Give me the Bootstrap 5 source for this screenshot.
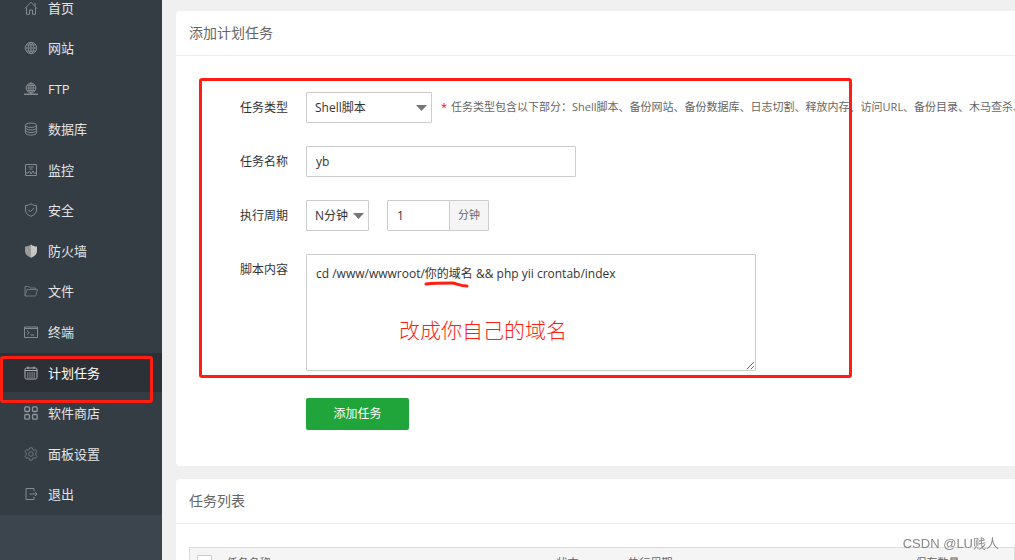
<!DOCTYPE html>
<html lang="zh-CN">
<head>
<meta charset="utf-8">
<meta name="viewport" content="width=device-width, initial-scale=1">
<title>计划任务</title>
<link href="https://cdn.jsdelivr.net/npm/bootstrap@5.3.0/dist/css/bootstrap.min.css" rel="stylesheet">
<script src="https://cdn.jsdelivr.net/npm/bootstrap@5.3.0/dist/js/bootstrap.bundle.min.js" defer></script>
<style>
  :root { --mark-red: #ff1e10; --line: #ccc; }
  body { font-family: "Open Sans", "Noto Sans CJK SC", sans-serif; font-size: 12px; line-height: 18px; color: #333; background: #f0f0f0; overflow: hidden; }
  .side { width: 162px; background: #3c444d; }
  /* the menu is scrolled a little past its top edge */
  .side-menu { height: 527px; margin-top: -12px; background: #353d44; }
  .side-menu li { flex: 1 1 0; padding-bottom: 1px; }
  .side-menu a { height: 100%; padding-left: 24px; gap: 10px; font-size: 13px; color: #e3e5e7; text-decoration: none; }
  .side-menu a.active { background: #2c3138; color: #fff; }
  .side-menu svg { width: 14px; height: 14px; fill: none; stroke: #858a8f; stroke-width: 1; flex: none; }
  .side-mark { position: absolute; left: 0; right: 9px; top: 3px; height: 47px; border: 3px solid var(--mark-red); border-radius: 3px; pointer-events: none; z-index: 1; }
  .main-col { padding: 11px 0 0 14px; min-width: 0; gap: 13px; }
  .panel { background: #fff; border-radius: 4px 0 0 4px; overflow: hidden; }
  .panel-title { height: 45px; padding: 1px 0 0 13px; border-bottom: 1px solid #eee; font-size: 14px; color: #666; margin: 0; font-weight: 400; }
  .task-form { padding: 36px 0; gap: 23px; }
  .field-row { display: flex; }
  .field-label { width: 112px; line-height: 31px; text-align: right; margin-right: 18px; flex: none; }
  .form-control, .form-select { height: 31px; border: 1px solid var(--line); border-radius: 1px; font-size: 12px; line-height: 18px; color: #333; padding: 5px 9px; }
  .form-select { padding: 5px 16px 5px 8px; background: #fff url("data:image/svg+xml,%3Csvg xmlns='http://www.w3.org/2000/svg' viewBox='0 0 11 6'%3E%3Cpath d='M0 0h11L5.5 6z' fill='%23767676'/%3E%3C/svg%3E") no-repeat right 4px center / 11px 6px; }
  .w-type { width: 126px; } .w-name { width: 270px; } .w-unit { width: 63px; } .w-cycle { width: 102px; margin-left: 18px; }
  .form-control.script-box { height: 117px; width: 450px; padding: 10px 9px; resize: both; }
  .input-group-text { border: 1px solid var(--line); border-radius: 0 1px 1px 0; background: #f5f5f5; color: #666; font-size: 11px; padding: 0 8px; }
  .help-note { font-size: 11px; line-height: 30px; color: #666; margin-left: 9px; white-space: nowrap; }
  .btn-add { background: #20a53a; color: #fff; border: 0; border-radius: 2px; width: 103px; height: 32px; font-size: 12px; padding: 0; margin: 4px 0 0 130px; }
  .btn-add:hover { background: #10952a; color: #fff; }
  .form-mark { position: absolute; left: 23px; top: 22px; width: 653px; height: 300px; border: 3px solid var(--mark-red); border-radius: 3px; pointer-events: none; }
  .line-mark { position: absolute; left: 118px; top: 26px; width: 46px; height: 8px; pointer-events: none; }
  .word-mark { position: absolute; left: 93px; top: 61px; font-size: 21px; line-height: 30px; font-weight: 300; color: var(--mark-red); white-space: nowrap; pointer-events: none; }
  .task-table { margin: 23px 0 0 13px; width: calc(100% - 13px); table-layout: fixed; border: 1px solid #ddd; font-size: 11px; line-height: 14px; }
  .task-table th { background: #f5f5f5; color: #666; font-weight: 400; padding: 7px; }
  .task-table .form-check-input { display: block; width: 15px; height: 15px; margin: 0; border-color: #ccc; border-radius: 1px; }
  .watermark { position: fixed; right: 16px; bottom: 6px; font-family: "Liberation Sans", "Noto Sans CJK SC", sans-serif; font-size: 13px; line-height: 20px; color: #888; }
</style>
</head>
<body>
<div class="d-flex min-vh-100">
  <nav class="side flex-shrink-0" aria-label="主菜单">
    <ul class="side-menu list-unstyled d-flex flex-column mb-0">
      <li><a class="d-flex align-items-center" href="#"><svg viewBox="0 0 14 14"><path d="M1 7.5 7 1.200l6 6.300M2.500 6.500v6.800h3V9h3v4.300h3V6.500M11 2v3"/></svg>首页</a></li>
      <li><a class="d-flex align-items-center" href="#"><svg viewBox="0 0 14 14"><circle cx="7" cy="7" r="5.700"/><ellipse cx="7" cy="7" rx="2.700" ry="5.700"/><path d="M7 1v12M1 7h12M2.200 4h9.600M2.200 10h9.600"/></svg>网站</a></li>
      <li><a class="d-flex align-items-center" href="#"><svg viewBox="0 0 14 14"><circle cx="7" cy="6" r="4.900"/><ellipse cx="7" cy="6" rx="2.300" ry="4.900"/><path d="M7 1v12M2 6h10M3 3.500h8M3 8.500h8"/><path d="M0 12.300h14M5.500 12.300h3" stroke-width="1.600"/></svg>FTP</a></li>
      <li><a class="d-flex align-items-center" href="#"><svg viewBox="0 0 14 14"><ellipse cx="7" cy="3.200" rx="5.600" ry="2.200"/><path d="M1.400 3.200v7.600c0 3 11.200 3 11.200 0V3.200M1.400 5.700c0 3 11.200 3 11.200 0M1.400 8.300c0 3 11.200 3 11.200 0"/></svg>数据库</a></li>
      <li><a class="d-flex align-items-center" href="#"><svg viewBox="0 0 14 14"><path d="M1.500 1.500h11v11h-11zM4.500 4h5M5.500 6h3M2 10h2l1.500-2L7 11l2-3 1 2h2"/></svg>监控</a></li>
      <li><a class="d-flex align-items-center" href="#"><svg viewBox="0 0 14 14"><path d="M7 .8C5.300 2 3.500 2.500 1.500 2.500V7c0 3 2 5 5.500 6.300C10.500 12 12.500 10 12.500 7V2.500C10.500 2.500 8.700 2 7 .8zM4 6.500l2.300 2.300 4-4"/></svg>安全</a></li>
      <li><a class="d-flex align-items-center" href="#"><svg viewBox="0 0 14 14"><path d="M7 .5C5 2 3 2.500 1 2.500V7c0 3 2 5 6 6.800z" fill="#9b9b9b" stroke="none"/><path d="M7 .5c2 1.500 4 2 6 2V7c0 3-2 5-6 6.800z" fill="#c8c8c8" stroke="none"/></svg>防火墙</a></li>
      <li><a class="d-flex align-items-center" href="#"><svg viewBox="0 0 14 14"><path d="M1 12V2.500h4l1.200 1.500h5.300v1.500M1 12l2-6.500h10.500L11.700 12z" stroke="#70767b"/></svg>文件</a></li>
      <li><a class="d-flex align-items-center" href="#"><svg viewBox="0 0 14 14"><path d="M.5 2h13v10.500H.5zM.5 3.500h13M3 5.800l2.300 1.900L3 9.600M6.500 10h3.500"/></svg>终端</a></li>
      <li class="position-relative"><a class="active d-flex align-items-center" href="#" aria-current="page"><svg viewBox="0 0 14 14"><g stroke="#b0b3b6"><rect x="1" y="2" width="12" height="11" rx="1.500"/><path d="M1 4.500h12M4 .5v2.500M10 .5v2.500"/><path d="M3 7h8M3 9h8M3 11h8" stroke-width="1.200" stroke-dasharray="1.400 .8"/></g></svg>计划任务</a><span class="side-mark"></span></li>
      <li><a class="d-flex align-items-center" href="#"><svg viewBox="0 0 14 14"><g stroke="#92969a" stroke-width="1.300"><rect x=".8" y=".8" width="4.700" height="4.700" rx="1"/><rect x="8.500" y=".8" width="4.700" height="4.700" rx="1"/><rect x=".8" y="8.500" width="4.700" height="4.700" rx="1"/><rect x="8.500" y="8.500" width="4.700" height="4.700" rx="1"/></g></svg>软件商店</a></li>
      <li><a class="d-flex align-items-center" href="#"><svg viewBox="0 0 14 14"><g stroke="#737980"><path d="M5.800.8h2.400l.4 1.600 1.400.8 1.600-.5 1.400 2-1.200 1.200v2.200l1.200 1.200-1.400 2-1.600-.5-1.400.8-.4 1.600H5.800l-.4-1.600-1.400-.8-1.600.5-1.400-2 1.200-1.200V5.900L1 4.700l1.400-2 1.600.5 1.400-.8z"/><circle cx="7" cy="7" r="2.300"/></g></svg>面板设置</a></li>
      <li><a class="d-flex align-items-center" href="#"><svg viewBox="0 0 14 14"><path d="M10 4V1.500H2v11h8V10M5.500 7H13M10.800 4.800 13 7l-2.200 2.200"/></svg>退出</a></li>
    </ul>
  </nav>

  <main class="main-col flex-grow-1 d-flex flex-column">
    <section class="panel">
      <h1 class="panel-title d-flex align-items-center">添加计划任务</h1>
      <form class="task-form position-relative d-flex flex-column" onsubmit="return false">
        <div class="field-row">
          <label class="field-label" for="type">任务类型</label>
          <select class="form-select w-type flex-shrink-0" id="type"><option>Shell脚本</option><option>备份网站</option><option>备份数据库</option></select>
          <span class="help-note"><span class="me-1" style="color:red">*</span>任务类型包含以下部分：Shell脚本、备份网站、备份数据库、日志切割、释放内存、访问URL、备份目录、木马查杀、同步时间</span>
        </div>
        <div class="field-row">
          <label class="field-label" for="name">任务名称</label>
          <input class="form-control w-name" id="name" type="text" value="yb">
        </div>
        <div class="field-row">
          <label class="field-label" for="unit">执行周期</label>
          <select class="form-select w-unit" id="unit"><option>N分钟</option><option>每小时</option><option>每天</option></select>
          <div class="input-group w-cycle flex-nowrap">
            <input class="form-control" id="cycle" type="text" value="1" aria-label="周期">
            <label class="input-group-text" for="cycle">分钟</label>
          </div>
        </div>
        <div class="field-row">
          <label class="field-label" for="script">脚本内容</label>
          <div class="position-relative">
            <textarea class="form-control script-box d-block" id="script" spellcheck="false">cd /www/wwwroot/你的域名 &amp;&amp; php yii crontab/index</textarea>
            <svg class="line-mark" viewBox="0 0 46 8"><path d="M2 4c9-1 18-1 25-1 6 0 8 3 16 3" fill="none" stroke="#ff1e10" stroke-width="3" stroke-linecap="round"/></svg>
            <span class="word-mark">改成你自己的域名</span>
          </div>
        </div>
        <button class="btn btn-add" type="submit">添加任务</button>
        <span class="form-mark"></span>
      </form>
    </section>

    <section class="panel flex-grow-1">
      <h2 class="panel-title d-flex align-items-center">任务列表</h2>
      <table class="task-table">
        <colgroup><col style="width:30px"><col style="width:40%"><col style="width:72px"><col><col style="width:106px"></colgroup>
        <thead><tr>
          <th scope="col"><input class="form-check-input" type="checkbox" aria-label="全选"></th>
          <th scope="col">任务名称</th><th scope="col">状态</th><th scope="col">执行周期</th><th scope="col">保存数量</th>
        </tr></thead>
      </table>
    </section>
  </main>
</div>
<div class="watermark">CSDN @LU贱人</div>
</body>
</html>
